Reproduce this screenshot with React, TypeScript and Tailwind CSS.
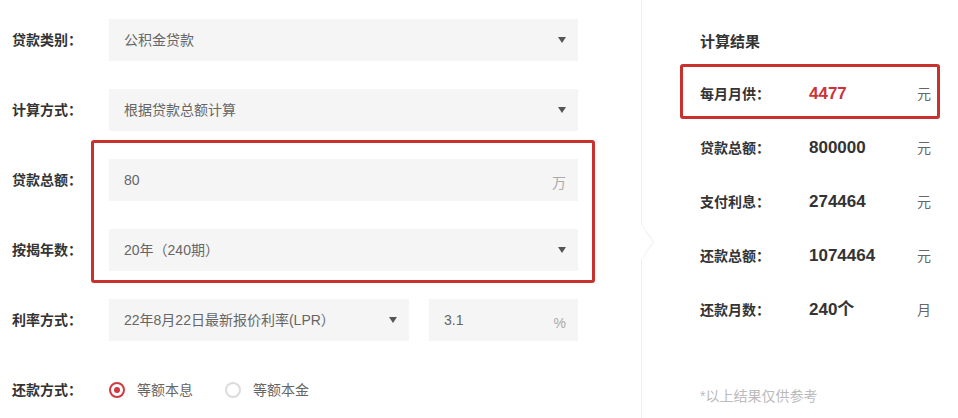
import React from "react";

function Caret() {
  return (
    <span className="w-0 h-0 border-l-[4px] border-r-[4px] border-t-[6px] border-l-transparent border-r-transparent border-t-[#555]" />
  );
}

function Select({ text, w }: { text: string; w: string }) {
  return (
    <div className={`${w} h-[42px] bg-[#f5f5f5] flex items-center justify-between pl-[15px] pr-[12px] text-[14px] leading-[20px] text-[#666]`}>
      <span>{text}</span>
      <Caret />
    </div>
  );
}

function Input({ text, unit, w }: { text: string; unit: string; w: string }) {
  return (
    <div className={`${w} h-[42px] bg-[#f5f5f5] flex items-center justify-between pl-[15px] pr-[12px] text-[14px] leading-[20px] text-[#666]`}>
      <span>{text}</span>
      <span className="text-[#aaa] pt-[6px]">{unit}</span>
    </div>
  );
}

function Row({ label, children }: { label: string; children: React.ReactNode }) {
  return (
    <div className="flex items-center h-[42px]">
      <div className="w-[97px] shrink-0 text-[14px] leading-[20px] font-bold text-[#333]">{label}</div>
      {children}
    </div>
  );
}

function Result({ label, value, unit, red }: { label: string; value: string; unit: string; red?: boolean }) {
  return (
    <div className="flex items-center h-[54px]">
      <div className="w-[109px] shrink-0 text-[14px] leading-[20px] font-bold text-[#333]">{label}</div>
      <div className={`w-[108px] shrink-0 text-[17px] leading-[22px] font-bold ${red ? "text-[#cc3338]" : "text-[#333]"}`}>{value}</div>
      <div className="text-[14px] leading-[20px] text-[#666]">{unit}</div>
    </div>
  );
}

export default function App() {
  return (
    <div className="relative flex w-[958px] h-[418px] overflow-hidden bg-white font-['Liberation_Sans','Noto_Sans_CJK_SC',sans-serif]">
      <div className="w-[641px] shrink-0 pl-[12px] pt-[19px] flex flex-col gap-[28px]">
        <Row label="贷款类别：">
          <Select text="公积金贷款" w="w-[469px]" />
        </Row>
        <Row label="计算方式：">
          <Select text="根据贷款总额计算" w="w-[469px]" />
        </Row>
        <Row label="贷款总额：">
          <Input text="80" unit="万" w="w-[469px]" />
        </Row>
        <Row label="按揭年数：">
          <Select text="20年（240期）" w="w-[469px]" />
        </Row>
        <Row label="利率方式：">
          <div className="flex gap-[20px]">
            <Select text="22年8月22日最新报价利率(LPR）" w="w-[300px]" />
            <Input text="3.1" unit="%" w="w-[149px]" />
          </div>
        </Row>
        <Row label="还款方式：">
          <div className="flex items-center text-[14px] leading-[20px] text-[#666]">
            <span className="w-[16px] h-[16px] rounded-full border-2 border-[#d03a3f] flex items-center justify-center">
              <span className="w-[6px] h-[6px] rounded-full bg-[#d03a3f]" />
            </span>
            <span className="ml-[12px]">等额本息</span>
            <span className="ml-[32px] w-[16px] h-[16px] rounded-full border-2 border-[#dcdcdc]" />
            <span className="ml-[12px]">等额本金</span>
          </div>
        </Row>
      </div>

      <div className="flex-1 border-l border-[#efefef] pl-[58px] pt-[32px] flex flex-col">
        <div className="text-[15px] leading-[20px] font-bold text-[#333] mb-[15px]">计算结果</div>
        <Result label="每月月供：" value="4477" unit="元" red />
        <Result label="贷款总额：" value="800000" unit="元" />
        <Result label="支付利息：" value="274464" unit="元" />
        <Result label="还款总额：" value="1074464" unit="元" />
        <Result label="还款月数：" value="240个" unit="月" />
        <div className="mt-[49px] text-[14px] leading-[20px] text-[#bbb]">*以上结果仅供参考</div>
      </div>

      <svg className="absolute left-[641px] top-[222px]" width="22" height="40" viewBox="0 0 22 40">
        <path d="M0 2 L13 20 L0 38" fill="white" stroke="#f2f2f2" strokeWidth="1" />
        <path d="M4 9 L12 20 L4 31" fill="none" stroke="#f6f6f6" strokeWidth="1" />
      </svg>

      <div className="absolute left-[91px] top-[140px] w-[504px] h-[143px] border-[3px] border-[#c8312d] rounded-[3px]" />
      <div className="absolute left-[680px] top-[64px] w-[260px] h-[55px] border-[3px] border-[#c8312d] rounded-[3px]" />
    </div>
  );
}
